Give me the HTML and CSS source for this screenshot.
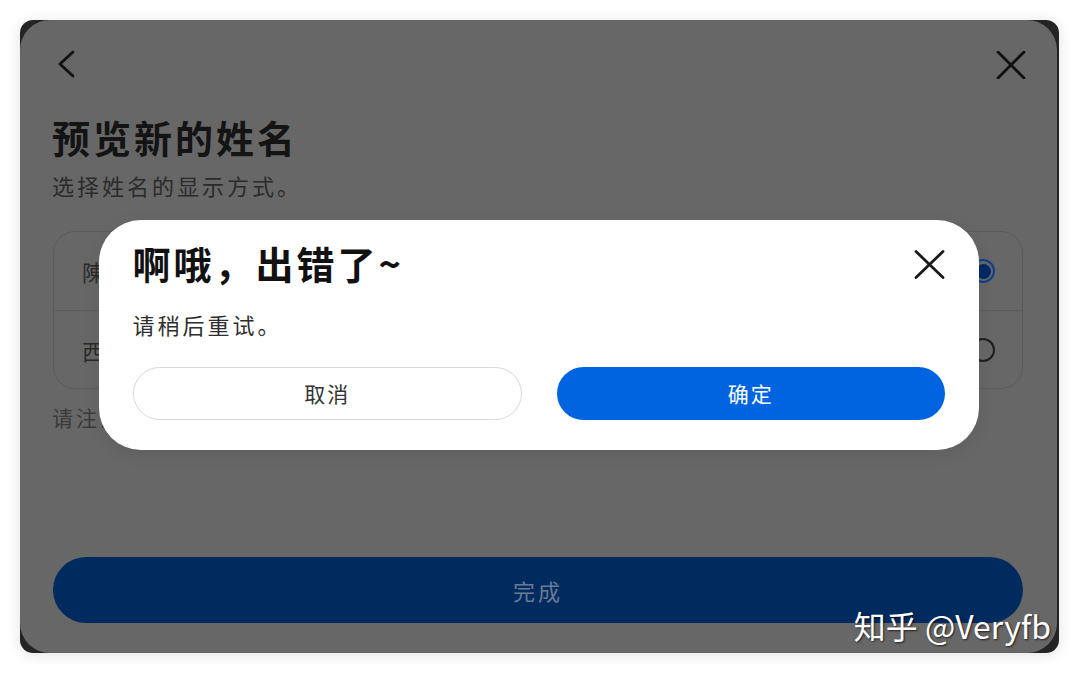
FILE: index.html
```html
<!DOCTYPE html>
<html lang="zh-CN">
<head>
<meta charset="utf-8">
<title>预览新的姓名</title>
<link rel="stylesheet" href="styles.css">
</head>
<body>
<div class="window">
  <div class="page">
    <div class="topbar">
      <svg class="icon-back" width="24" height="28" viewBox="0 0 24 28"><path d="M18 2 L5 14 L18 26" fill="none" stroke="#111" stroke-width="2.8" stroke-linecap="round" stroke-linejoin="round"/></svg>
      <svg class="icon-close" width="30" height="28" viewBox="0 0 30 28"><path d="M2 1 L28 27 M28 1 L2 27" fill="none" stroke="#111" stroke-width="2.8" stroke-linecap="round"/></svg>
    </div>
    <h1 class="title">预览新的姓名</h1>
    <p class="subtitle">选择姓名的显示方式。</p>
    <div class="options">
      <div class="option">
        <span class="option-label">陳大文</span>
        <span class="radio radio-on"><span class="radio-dot"></span></span>
      </div>
      <div class="option">
        <span class="option-label">西式格式</span>
        <span class="radio"></span>
      </div>
    </div>
    <p class="note">请注意</p>
    <div class="spacer"></div>
    <div class="done">完成</div>
    <div class="overlay">
      <div class="dialog">
        <div class="dialog-head">
          <h2 class="dialog-title">啊哦，出错了~</h2>
          <svg class="dialog-close" width="31" height="29" viewBox="0 0 31 29"><path d="M2 1.5 L29 27.5 M29 1.5 L2 27.5" fill="none" stroke="#1a1a1a" stroke-width="2.8" stroke-linecap="round"/></svg>
        </div>
        <p class="dialog-text">请稍后重试。</p>
        <div class="dialog-actions">
          <div class="btn btn-cancel">取消</div>
          <div class="btn btn-ok">确定</div>
        </div>
      </div>
    </div>
  </div>
  <div class="watermark">知乎 @Veryfb</div>
</div>
</body>
</html>
```

FILE: styles.css
```css
* { box-sizing: border-box; }
html, body {
  margin: 0;
  padding: 0;
  background: #ffffff;
  width: 1080px;
  height: 673px;
  overflow: hidden;
  font-family: "Noto Sans CJK SC", "Noto Sans", sans-serif;
}
.window {
  position: relative;
  margin: 20px 0 0 20px;
  width: 1039px;
  height: 633px;
  background: #242424;
  border-radius: 13px;
  box-shadow: 0 2px 14px rgba(0, 0, 0, 0.12);
  display: flex;
  padding-right: 2px;
  overflow: hidden;
}
.page {
  position: relative;
  flex: 1;
  background: #676767;
  border-radius: 30px;
  display: flex;
  flex-direction: column;
  padding: 30px 34px 30px 32px;
}
.topbar {
  height: 30px;
  display: flex;
  justify-content: space-between;
  align-items: flex-start;
  padding-left: 2px;
}
.icon-back { margin-left: 1px; }
.icon-close { margin-top: 1px; margin-right: -3px; }
.title {
  margin: 35px 0 0 0;
  font-size: 38px;
  line-height: 44px;
  font-weight: 700;
  letter-spacing: 3px;
  color: #141414;
}
.subtitle {
  margin: 12px 0 0 0;
  font-size: 22px;
  line-height: 28px;
  letter-spacing: 3px;
  color: #2b2b2b;
}
.options {
  margin-top: 32px;
  margin-left: 1px;
  border: 1.5px solid #5b5b5b;
  border-radius: 22px;
  display: flex;
  flex-direction: column;
}
.option {
  height: 78px;
  display: flex;
  align-items: center;
  justify-content: space-between;
  padding: 0 27px 0 28px;
}
.option + .option { border-top: 1.5px solid #5b5b5b; }
.option-label {
  font-size: 22px;
  letter-spacing: 3px;
  color: #2a2a2a;
}
.radio {
  width: 24px;
  height: 24px;
  border-radius: 50%;
  border: 2.5px solid #1e1e1e;
  display: flex;
  align-items: center;
  justify-content: center;
}
.radio-on { border-color: #123f8a; }
.radio-dot {
  width: 15px;
  height: 15px;
  border-radius: 50%;
  background: #012a66;
}
.note {
  margin: 14px 0 0 0;
  font-size: 21px;
  line-height: 28px;
  letter-spacing: 3px;
  color: #3a3a3a;
}
.spacer { flex: 1; }
.done {
  height: 66px;
  margin-left: 1px;
  border-radius: 33px;
  background: #012a5e;
  display: flex;
  align-items: center;
  justify-content: center;
  font-size: 22px;
  letter-spacing: 3px;
  color: #6a7b96;
}
.overlay {
  position: absolute;
  inset: 0;
  display: flex;
  align-items: center;
  justify-content: center;
  padding-bottom: 4px;
}
.dialog {
  width: 880px;
  background: #ffffff;
  border-radius: 42px;
  padding: 20px 34px 30px 34px;
  box-shadow: 0 4px 18px rgba(0, 0, 0, 0.08);
}
.dialog-head {
  display: flex;
  justify-content: space-between;
  align-items: center;
}
.dialog-title {
  margin: 0;
  font-size: 38px;
  line-height: 46px;
  font-weight: 700;
  letter-spacing: 3px;
  color: #111111;
}
.dialog-close { margin-top: 4px; margin-right: 0; }
.dialog-text {
  margin: 24px 0 0 0;
  font-size: 22px;
  line-height: 28px;
  letter-spacing: 3px;
  color: #2e2e2e;
}
.dialog-actions {
  margin-top: 29px;
  display: flex;
  gap: 35px;
}
.btn {
  flex: 1;
  height: 53px;
  border-radius: 27px;
  display: flex;
  align-items: center;
  justify-content: center;
  font-size: 21px;
  letter-spacing: 2px;
}
.btn-cancel {
  border: 1.5px solid #d8d8d8;
  color: #333333;
}
.btn-ok {
  background: #0064e0;
  color: #ffffff;
}
.watermark {
  position: absolute;
  right: 8px;
  bottom: 8px;
  font-family: "Noto Sans CJK SC", "Noto Sans", sans-serif;
  font-size: 32px;
  line-height: 40px;
  color: #ffffff;
  text-shadow: 1px 1px 2px rgba(0, 0, 0, 0.7);
}
```
